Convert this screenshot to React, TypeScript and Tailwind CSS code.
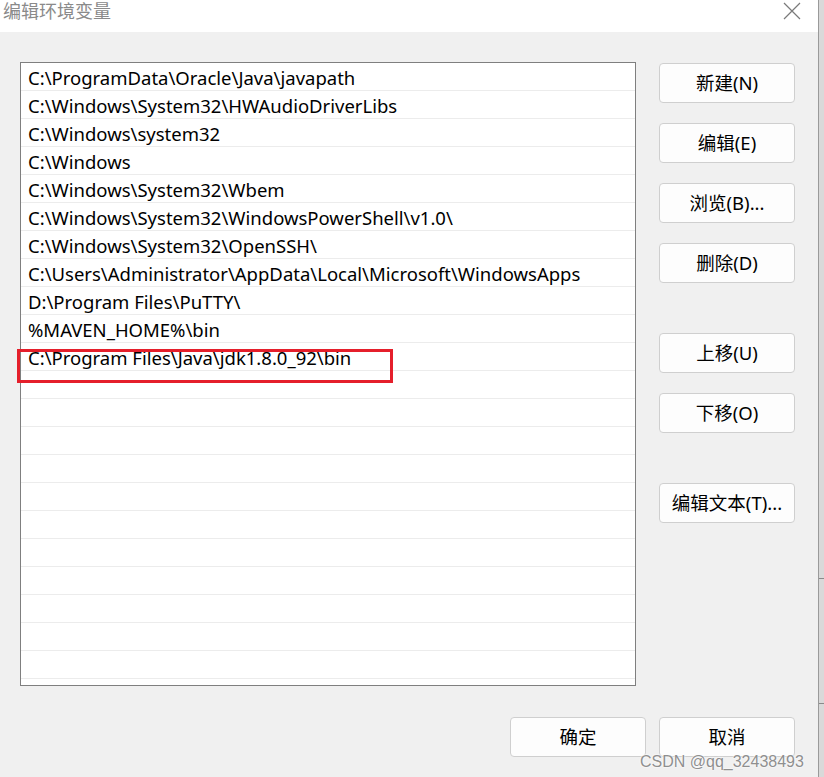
const paths = [
  'C:\\ProgramData\\Oracle\\Java\\javapath',
  'C:\\Windows\\System32\\HWAudioDriverLibs',
  'C:\\Windows\\system32',
  'C:\\Windows',
  'C:\\Windows\\System32\\Wbem',
  'C:\\Windows\\System32\\WindowsPowerShell\\v1.0\\',
  'C:\\Windows\\System32\\OpenSSH\\',
  'C:\\Users\\Administrator\\AppData\\Local\\Microsoft\\WindowsApps',
  'D:\\Program Files\\PuTTY\\',
  '%MAVEN_HOME%\\bin',
  'C:\\Program Files\\Java\\jdk1.8.0_92\\bin',
];

const rows = [...paths, ...Array(12).fill('')];

const font = { fontFamily: '"Noto Sans", "Noto Sans CJK SC", sans-serif' };

const Btn = ({ label, className = '' }: { label: string; className?: string }) => (
  <button
    className={`w-[136px] h-[40px] shrink-0 rounded-[4px] border border-[#cfcfcf] bg-[#fdfdfd] text-[18.5px] text-black ${className}`}
    style={font}
  >
    {label}
  </button>
);

export default function App() {
  return (
    <div className="w-[824px] h-[777px] flex overflow-hidden bg-[#f0f0f0] relative" style={font}>
      <div className="w-[818px] flex flex-col">
        {/* Title bar */}
        <div className="h-[32px] bg-white flex items-start justify-between shrink-0">
          <span className="ml-[3px] -mt-[3px] text-[18px] leading-[28px] text-[#8a8a8a]">编辑环境变量</span>
          <svg width="18" height="18" viewBox="0 0 18 18" className="mr-[17px] mt-[2px]">
            <path d="M1 1 L17 17 M17 1 L1 17" stroke="#7a7a7a" strokeWidth="1.2" fill="none" />
          </svg>
        </div>

        {/* Body */}
        <div className="flex-1 flex flex-col pt-[30px] pl-[20px] pr-[23px]">
          <div className="flex gap-[23px]">
            <div className="relative w-[616px] h-[624px] border border-[#7f7f7f] bg-white overflow-hidden">
              {rows.map((p, i) => (
                <div
                  key={i}
                  className="h-[28px] border-b border-[#ececec] pl-[7px] text-[18.5px] leading-[30px] text-black whitespace-nowrap"
                >
                  {p}
                </div>
              ))}
            </div>
            <div className="flex flex-col gap-5 pt-px">
              <Btn label="新建(N)" />
              <Btn label="编辑(E)" />
              <Btn label="浏览(B)..." />
              <Btn label="删除(D)" />
              <Btn label="上移(U)" className="mt-[30px]" />
              <Btn label="下移(O)" />
              <Btn label="编辑文本(T)..." className="mt-[30px]" />
            </div>
          </div>
          <div className="flex justify-end gap-[13px] mt-[31px]">
            <Btn label="确定" />
            <Btn label="取消" />
          </div>
        </div>
      </div>

      {/* Desktop strip behind the window */}
      <div className="flex-1 border-l border-[#9a9a9a] bg-[#d9d9d9] flex flex-col">
        <div className="h-[579px] border-b border-[#8a8a8a]" />
        <div className="h-[125px] border-b border-[#8a8a8a]" />
      </div>

      {/* Red annotation box */}
      <div className="absolute left-[17px] top-[349px] w-[376px] h-[34px] border-[3px] border-[#e51f2b]" />

      {/* Watermark */}
      <div
        className="absolute left-[640px] top-[750px] text-[16px] text-[#8f8f8f] whitespace-nowrap [text-shadow:0_0_2px_#fff,0_0_2px_#fff]"
        style={{ fontFamily: '"Liberation Sans", Arial, sans-serif' }}
      >
        CSDN @qq_32438493
      </div>
    </div>
  );
}
